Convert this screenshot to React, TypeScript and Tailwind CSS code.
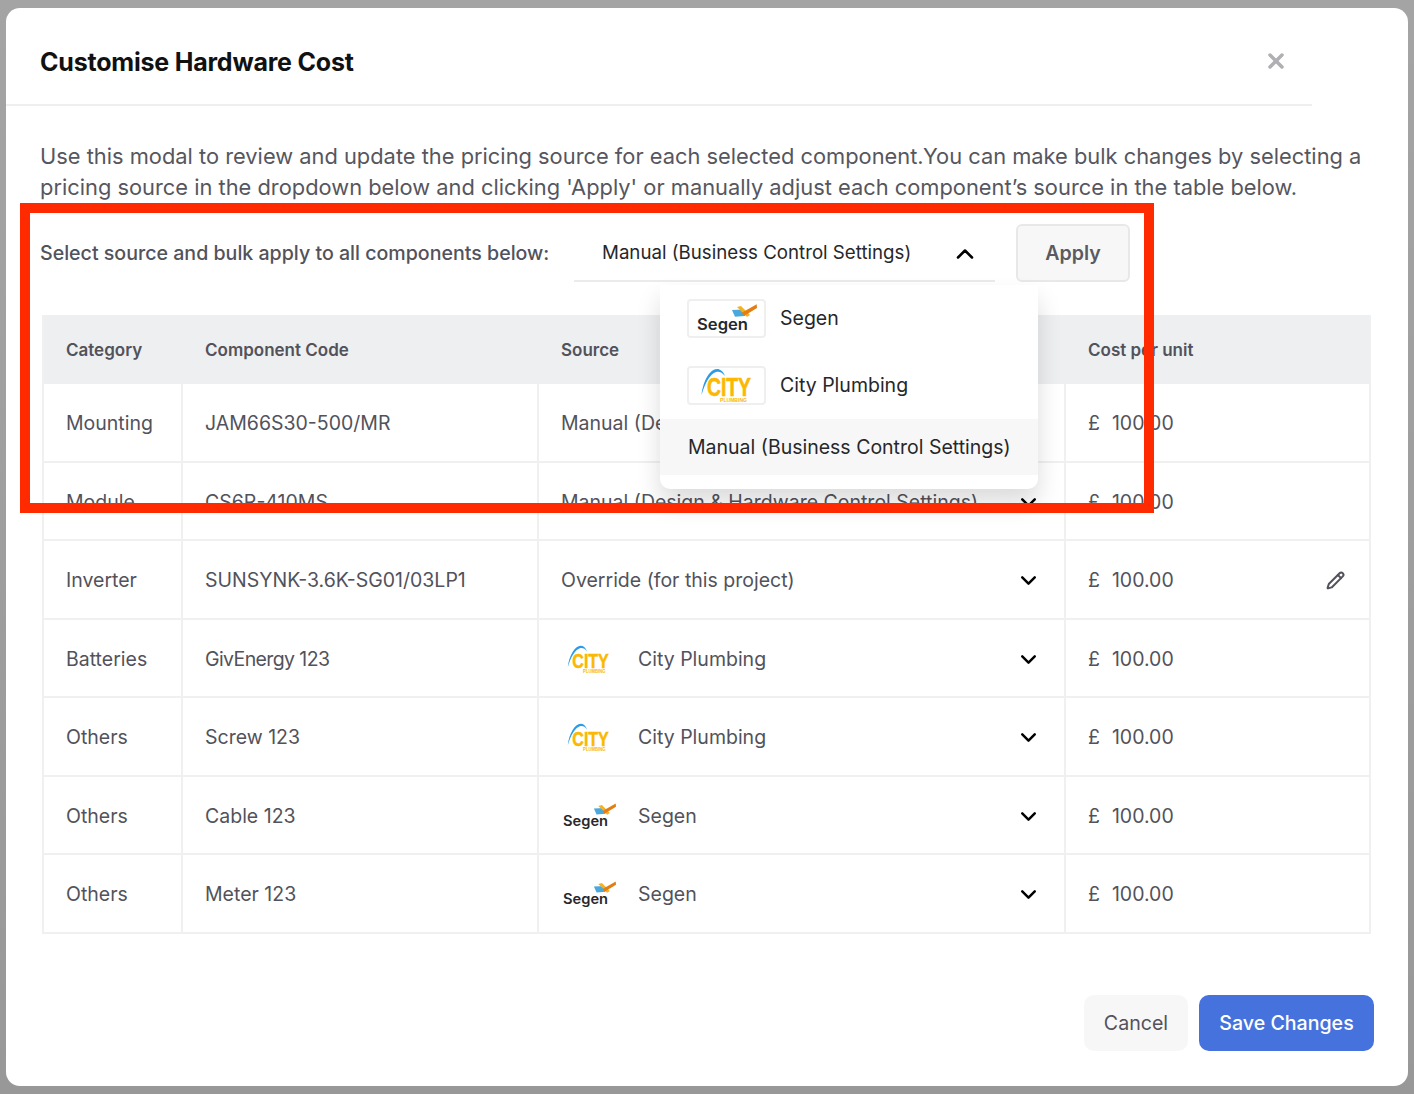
import React from 'react';
import { ChevronDown, ChevronUp, Pencil, X } from 'lucide-react';

type Source = 'manual' | 'override' | 'city' | 'segen';

type Row = {
	category: string;
	code: string;
	source: Source;
	editable?: boolean;
	codeClass?: string;
};

const rows: Row[] = [
	{ category: 'Mounting', code: 'JAM66S30-500/MR', source: 'manual' },
	{ category: 'Module', code: 'CS6R-410MS', source: 'manual' },
	{ category: 'Inverter', code: 'SUNSYNK-3.6K-SG01/03LP1', source: 'override', editable: true },
	{ category: 'Batteries', code: 'GivEnergy 123', source: 'city', codeClass: 'tracking-[-0.6px]' },
	{ category: 'Others', code: 'Screw 123', source: 'city' },
	{ category: 'Others', code: 'Cable 123', source: 'segen' },
	{ category: 'Others', code: 'Meter 123', source: 'segen' },
];

const SegenLogo = ({ className }: { className: string }) => (
	<svg viewBox="0 0 60 30" className={className}>
		<path d="M35 6 L47 5.5 L48 12 L38 12.7 Z" fill="#4aa8dc" />
		<path d="M40 3 L44 2 L53 11 L50 13 Z" fill="#f5b21f" />
		<path d="M44.7 8.7 L59.7 0.3 L60 4 L47 12 Z" fill="#e57e12" />
		<text x="0" y="26" fontFamily="Inter, sans-serif" fontWeight="600" fontSize="16" textLength="51" lengthAdjust="spacingAndGlyphs" fill="#26282c">
			Segen
		</text>
	</svg>
);

const CityLogo = ({ className }: { className: string }) => (
	<svg viewBox="0 0 51 35" className={className}>
		<path d="M0.5 27 C2 13 9 1 16 1 C19 1 22 3 24 8 C21 4 18 3 15 4 C9 6 4 15 0.5 27 Z" fill="#2a9be8" />
		<text x="6" y="28" fontFamily="'Liberation Sans', sans-serif" fontWeight="700" fontSize="25" textLength="44" lengthAdjust="spacingAndGlyphs" fill="#fbb800" stroke="#fbb800" strokeWidth="0.6">
			CITY
		</text>
		<text x="19" y="34" fontFamily="'Liberation Sans', sans-serif" fontWeight="700" fontSize="6" textLength="27" lengthAdjust="spacingAndGlyphs" fill="#fbb800">
			PLUMBING
		</text>
	</svg>
);

const SourceCell = ({ source }: { source: Source }) => {
	if (source === 'manual') return <span>Manual (Design &amp; Hardware Control Settings)</span>;
	if (source === 'override') return <span>Override (for this project)</span>;
	return (
		<div className="flex items-center">
			<div className="w-[77px] flex justify-start">
				{source === 'city' && <CityLogo className="ml-[6px] w-[43px] h-[29px]" />}
				{source === 'segen' && <SegenLogo className="ml-[2px] w-[53px] h-[27px]" />}
			</div>
			<span>{source === 'city' ? 'City Plumbing' : 'Segen'}</span>
		</div>
	);
};

const TableRow = ({ row }: { row: Row }) => (
	<div className="grid grid-cols-[139px_356px_527px_1fr] h-[78.5px] border-b-2 border-[#f0f0f0] text-[19.5px] text-[#52525b]">
		<div className="flex items-center pt-[3px] pl-[22px] border-r-2 border-[#f0f0f0]">{row.category}</div>
		<div className={`flex items-center pt-[3px] pl-[22px] border-r-2 border-[#f0f0f0] ${row.codeClass ?? ''}`}>{row.code}</div>
		<div className="flex items-center justify-between pt-[3px] pl-[22px] pr-[23px] border-r-2 border-[#f0f0f0]">
			<SourceCell source={row.source} />
			<ChevronDown className="w-[25px] h-[25px] text-black" strokeWidth={2.4} />
		</div>
		<div className="flex items-center justify-between pt-[3px] pl-[22px] pr-[24px]">
			<div className="flex gap-[12px]">
				<span>£</span>
				<span>100.00</span>
			</div>
			{row.editable && <Pencil className="w-[19px] h-[19px] text-[#52525b]" strokeWidth={2.5} />}
		</div>
	</div>
);

const App = () => {
	return (
		<div className="w-[1414px] h-[1094px] pt-[8px] pl-[6px] bg-linear-to-b from-[#a4a4a4] to-[#989898] font-[Inter,sans-serif] overflow-hidden">
			<div className="relative w-[1402px] h-[1078px] rounded-[14px] bg-white">
				<header className="w-[1306px] h-[98px] flex items-center justify-between pt-[14px] pl-[34px] pr-[24px] border-b-2 border-[#efefef]">
					<h1 className="text-[25px] font-bold tracking-[-0.2px] text-[#111111]">Customise Hardware Cost</h1>
					<X className="w-[24px] h-[24px] -mt-[4px] text-[#b0b0b4]" strokeWidth={3.5} />
				</header>

				<p className="mt-[35px] px-[34px] text-[21.85px] leading-[31px] text-[#56565e]">
					Use this modal to review and update the pricing source for each selected component.You can make bulk changes by selecting a pricing source in the dropdown below and clicking 'Apply' or manually adjust each component’s source in the table below.
				</p>

				<section className="mt-[21px] ml-[34px] flex items-center h-[58px]">
					<span className="w-[534px] pt-[2px] text-[19.6px] font-medium text-[#52525b]">Select source and bulk apply to all components below:</span>
					<div className="relative w-[421px] h-[58px] flex items-center justify-between pt-[3px] pl-[28px] pr-[16px] border-b-2 border-[#ebebeb]">
						<span className="text-[18.7px] text-[#27272a]">Manual (Business Control Settings)</span>
						<ChevronUp className="w-[28px] h-[28px] text-black" strokeWidth={2.2} />

						<div className="absolute z-10 left-[86px] top-[61px] w-[378px] h-[204px] bg-white rounded-b-[10px] shadow-[0_14px_24px_rgba(0,0,0,0.14)]">
							<div className="flex flex-col">
								<div className="flex items-center h-[67px] pl-[27px] gap-[14px]">
									<div className="w-[79px] h-[39px] flex items-center justify-center rounded-[4px] border-2 border-[#efefef]">
										<SegenLogo className="w-[60px] h-[30px]" />
									</div>
									<span className="text-[19.5px] text-[#27272a]">Segen</span>
								</div>
								<div className="flex items-center h-[67px] pl-[27px] gap-[14px]">
									<div className="w-[79px] h-[39px] flex items-center justify-center rounded-[4px] border-2 border-[#efefef]">
										<CityLogo className="w-[51px] h-[35px]" />
									</div>
									<span className="text-[19.5px] text-[#27272a]">City Plumbing</span>
								</div>
								<div className="flex items-center h-[56px] pt-[2px] pl-[28px] bg-[#f7f7f7] text-[19.5px] text-[#27272a]">
									Manual (Business Control Settings)
								</div>
							</div>
						</div>
					</div>
					<button className="ml-[21px] w-[114px] h-[58px] pt-[2px] rounded-[6px] border-2 border-[#e8e8e8] bg-[#f7f7f7] text-[19.6px] font-semibold text-[#5a5a62]">
						Apply
					</button>
				</section>

				<section className="mt-[33px] ml-[36px] w-[1329px] border-x-2 border-[#f0f0f0]">
					<div className="grid grid-cols-[139px_356px_527px_1fr] h-[69px] pt-[3px] items-center bg-[#eeeff1] text-[17px] font-semibold text-[#52525b]">
						<div className="pl-[22px]">Category</div>
						<div className="pl-[22px]">Component Code</div>
						<div className="pl-[22px]">Source</div>
						<div className="pl-[22px]">Cost per unit</div>
					</div>
					{rows.map((row, i) => (
						<TableRow key={i} row={row} />
					))}
				</section>

				<footer className="mt-[61px] pr-[34px] flex justify-end gap-[11px]">
					<button className="w-[104px] h-[56px] pt-[2px] rounded-[10px] bg-[#f7f7f7] text-[19.6px] text-[#52525b]">Cancel</button>
					<button className="w-[175px] h-[56px] pt-[2px] rounded-[10px] bg-[#4672de] text-[19.6px] font-medium text-white">Save Changes</button>
				</footer>

				<div className="absolute z-20 left-[14px] top-[195px] w-[1134px] h-[310px] border-10 border-[#ff2a00] pointer-events-none" />
			</div>
		</div>
	);
};

export default App;
